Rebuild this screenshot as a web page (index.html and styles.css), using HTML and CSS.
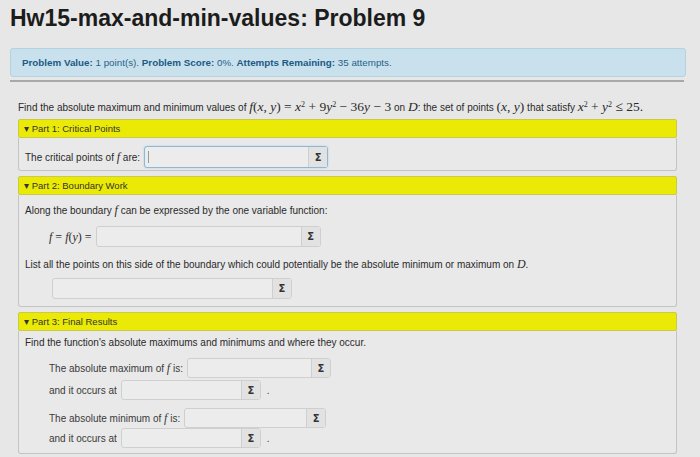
FILE: index.html
```html
<!DOCTYPE html>
<html lang="en">
<head>
    <meta charset="UTF-8">
    <meta name="viewport" content="width=device-width, initial-scale=1.0">
    <title>Hw15-max-and-min-values: Problem 9</title>
    <link rel="stylesheet" href="styles.css">
</head>
<body>
    <h1 class="title">Hw15-max-and-min-values: Problem 9</h1>
    <div class="info">
        <b>Problem Value:</b> 1 point(s). <b>Problem Score:</b> 0%. <b>Attempts Remaining:</b> 35 attempts.
    </div>
    <hr class="rule">

    <p class="problem">
        Find the absolute maximum and minimum values of
        <span class="math">f</span><span class="mr">(</span><span class="math">x</span><span class="mr">, </span><span class="math">y</span><span class="mr">) = </span><span class="math">x</span><sup>2</sup><span class="mr"> + 9</span><span class="math">y</span><sup>2</sup><span class="mr"> &minus; 36</span><span class="math">y</span><span class="mr"> &minus; 3</span>
        on <span class="math">D</span>: the set of points <span class="mr">(</span><span class="math">x</span><span class="mr">, </span><span class="math">y</span><span class="mr">)</span> that satisfy
        <span class="math">x</span><sup>2</sup><span class="mr"> + </span><span class="math">y</span><sup>2</sup><span class="mr"> &le; 25.</span>
    </p>

    <div class="part">
        <div class="part-head">&#9662; Part 1: Critical Points</div>
        <div class="part-body part1">
            <div class="row">
                <span>The critical points of <span class="math">f</span> are:</span>
                <span class="answer focus w182"><span class="field"></span><span class="sigma">&Sigma;</span></span>
            </div>
        </div>
    </div>

    <div class="part">
        <div class="part-head">&#9662; Part 2: Boundary Work</div>
        <div class="part-body part2">
            <p>Along the boundary <span class="math">f</span> can be expressed by the one variable function:</p>
            <div class="row fn-row">
                <span><span class="math">f</span><span class="mr"> = </span><span class="math">f</span><span class="mr">(</span><span class="math">y</span><span class="mr">) =</span></span>
                <span class="answer w223"><span class="field"></span><span class="sigma">&Sigma;</span></span>
            </div>
            <p class="list-text">List all the points on this side of the boundary which could potentially be the absolute minimum or maximum on <span class="math">D</span>.</p>
            <div class="row list-row">
                <span class="answer w238"><span class="field"></span><span class="sigma">&Sigma;</span></span>
            </div>
        </div>
    </div>

    <div class="part">
        <div class="part-head">&#9662; Part 3: Final Results</div>
        <div class="part-body part3">
            <p>Find the function's absolute maximums and minimums and where they occur.</p>
            <div class="results">
                <div class="row">
                    <span>The absolute maximum of <span class="math">f</span> is:</span>
                    <span class="answer w142"><span class="field"></span><span class="sigma">&Sigma;</span></span>
                </div>
                <div class="row">
                    <span>and it occurs at</span>
                    <span class="answer w138"><span class="field"></span><span class="sigma">&Sigma;</span></span>
                    <span class="dot">.</span>
                </div>
                <div class="row gap-top">
                    <span>The absolute minimum of <span class="math">f</span> is:</span>
                    <span class="answer w140"><span class="field"></span><span class="sigma">&Sigma;</span></span>
                </div>
                <div class="row">
                    <span>and it occurs at</span>
                    <span class="answer w138"><span class="field"></span><span class="sigma">&Sigma;</span></span>
                    <span class="dot">.</span>
                </div>
            </div>
        </div>
    </div>
</body>
</html>
```

FILE: styles.css
```css
body {
    font-family: "Liberation Sans", Arial, sans-serif;
    font-size: 10px;
    color: #2a2a2a;
    background-color: #e7e7e7;
    margin: 0;
    padding: 4px 14px 0 10px;
}
.title {
    font-size: 23px;
    font-weight: bold;
    color: #1c1c1c;
    margin: 0 0 16px 0;
    line-height: 28px;
}
.info {
    background-color: #c8e1ec;
    border: 1px solid #b4d3e0;
    border-radius: 3px;
    color: #2a6288;
    font-size: 9.8px;
    padding: 8px 11px;
    line-height: 11px;
}
.info b {
    color: #1d5a85;
}
.rule {
    border: none;
    border-top: 2px solid #a8a8a8;
    margin: 3px 2px 0 0;
}
.problem {
    margin: 17px 0 3px 8px;
    line-height: 16px;
}
.math {
    font-family: "Liberation Serif", "Times New Roman", serif;
    font-style: italic;
    font-size: 13.5px;
}
.mr {
    font-family: "Liberation Serif", "Times New Roman", serif;
    font-size: 13.5px;
}
sup {
    font-family: "Liberation Serif", serif;
    font-size: 8px;
    line-height: 0;
}
.part-body .math,
.part-body .mr {
    font-size: 12px;
    line-height: 12px;
}
.part {
    margin: 0 9px 5px 8px;
}
.part-head {
    background-color: #eaea06;
    border: 1px solid #c9c94a;
    border-radius: 2px;
    font-size: 9.5px;
    line-height: 17px;
    padding-left: 5px;
    color: #333;
}
.part-body {
    border: 1px solid #c4c4c4;
    border-top: none;
    border-radius: 0 0 3px 3px;
    background-color: #e9e9e9;
    padding: 0 6px;
}
.part-body p {
    margin: 0;
    line-height: 14px;
}
.row {
    display: flex;
    align-items: center;
    gap: 4px;
}
.part1 {
    padding-top: 8px;
    padding-bottom: 2px;
}
.part1 .answer {
    height: 20px;
}
.part2 {
    padding-top: 9px;
    padding-bottom: 7px;
}
.fn-row {
    margin: 8px 0 11px 24px;
}
.list-row {
    margin: 6px 0 0 27px;
}
.part2 .answer {
    height: 19px;
}
.part3 {
    padding-top: 5px;
    padding-bottom: 3px;
}
.results {
    margin: 8px 0 0 24px;
    color: #3a3a3a;
}
.results .row {
    margin-bottom: 2px;
}
.results .gap-top {
    margin-top: 8px;
    margin-bottom: 0;
}
.answer {
    display: flex;
    height: 18px;
    border: 1px solid #cfcfcf;
    border-radius: 3px;
    background-color: #ececec;
}
.answer.focus {
    border-color: #8fb7d6;
    box-shadow: 0 0 2px #a9cbe4;
}
.field {
    flex: 1;
}
.sigma {
    width: 18px;
    border-left: 1px solid #cfcfcf;
    background-color: #e2e2e2;
    font-family: "DejaVu Sans", sans-serif;
    font-weight: bold;
    font-size: 10px;
    color: #333;
    display: flex;
    align-items: center;
    justify-content: center;
}
.focus .field {
    border-left: 1px solid #9a9a9a;
    margin: 4px 0 4px 3px;
}
.w182 { width: 182px; }
.w223 { width: 223px; }
.w238 { width: 238px; }
.w142 { width: 142px; }
.w140 { width: 140px; }
.w138 { width: 138px; }
.dot {
    margin-left: 2px;
}
```
